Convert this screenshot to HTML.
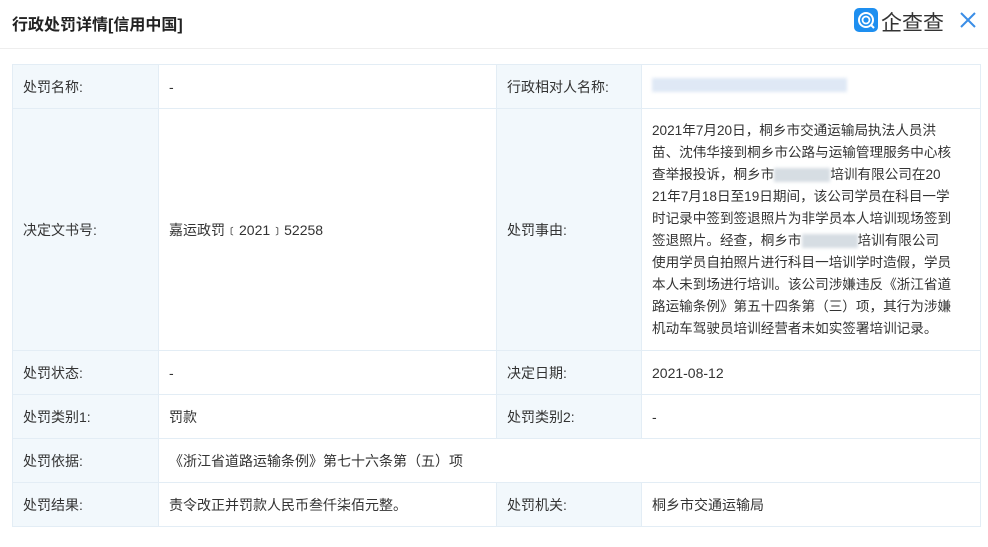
<!DOCTYPE html>
<html><head><meta charset="utf-8"><style>
body{margin:0;width:988px;height:547px;background:#fff;font-family:"Liberation Sans","Noto Sans CJK SC",sans-serif;color:#333;overflow:hidden;position:relative}
.hd{height:48px;border-bottom:1px solid #eee;position:relative}
.tt{position:absolute;left:12px;top:11px;font-size:16px;color:#222;font-weight:bold}
.logo{position:absolute;left:854px;top:8px;width:24px;height:24px;background:#1e8ff0;border-radius:5px}
.lt{position:absolute;left:881px;top:7px;font-size:21px;color:#333}
.x{position:absolute;left:958px;top:10px}
table{position:absolute;left:12px;top:64px;border-collapse:collapse;font-size:14px;width:968px;table-layout:fixed}
td{border:1px solid #e3edf5;padding:0 10px;height:44px;vertical-align:middle;box-sizing:border-box}
td.l{background:#f2f8fc}
.r{font-size:13.6px;line-height:22px;padding:10px 10px;white-space:nowrap;height:242px}
.b{display:inline-block;width:56px;height:14px;vertical-align:middle;background:#d6dde3;filter:blur(1.5px)}
</style></head><body>
<div class="hd"><div class="tt">行政处罚详情[信用中国]</div>
<div class="logo"><svg width="24" height="24"><circle cx="12" cy="12" r="7" fill="none" stroke="#fff" stroke-width="2"/><circle cx="12" cy="12" r="3.5" fill="none" stroke="#fff" stroke-width="1.8"/><path d="M17 17l3 3" stroke="#fff" stroke-width="2"/></svg></div>
<div class="lt">企查查</div>
<svg class="x" width="20" height="20"><path d="M3 3L17 17M17 3L3 17" stroke="#3a8ee6" stroke-width="2"/></svg></div>
<table>
<colgroup><col style="width:146px"><col style="width:338px"><col style="width:145px"><col style="width:339px"></colgroup>
<tr><td class="l">处罚名称:</td><td>-</td><td class="l">行政相对人名称:</td><td><span style="display:inline-block;width:195px;height:14px;background:#dfe8f5;filter:blur(1.5px)"></span></td></tr>
<tr><td class="l">决定文书号:</td><td>嘉运政罚﹝2021﹞52258</td><td class="l">处罚事由:</td><td class="r">2021年7月20日，桐乡市交通运输局执法人员洪<br>苗、沈伟华接到桐乡市公路与运输管理服务中心核<br>查举报投诉，桐乡市<span class="b"></span>培训有限公司在20<br>21年7月18日至19日期间，该公司学员在科目一学<br>时记录中签到签退照片为非学员本人培训现场签到<br>签退照片。经查，桐乡市<span class="b"></span>培训有限公司<br>使用学员自拍照片进行科目一培训学时造假，学员<br>本人未到场进行培训。该公司涉嫌违反《浙江省道<br>路运输条例》第五十四条第（三）项，其行为涉嫌<br>机动车驾驶员培训经营者未如实签署培训记录。</td></tr>
<tr><td class="l">处罚状态:</td><td>-</td><td class="l">决定日期:</td><td>2021-08-12</td></tr>
<tr><td class="l">处罚类别1:</td><td>罚款</td><td class="l">处罚类别2:</td><td>-</td></tr>
<tr><td class="l">处罚依据:</td><td colspan="3">《浙江省道路运输条例》第七十六条第（五）项</td></tr>
<tr><td class="l">处罚结果:</td><td>责令改正并罚款人民币叁仟柒佰元整。</td><td class="l">处罚机关:</td><td>桐乡市交通运输局</td></tr>
</table>
</body></html>
